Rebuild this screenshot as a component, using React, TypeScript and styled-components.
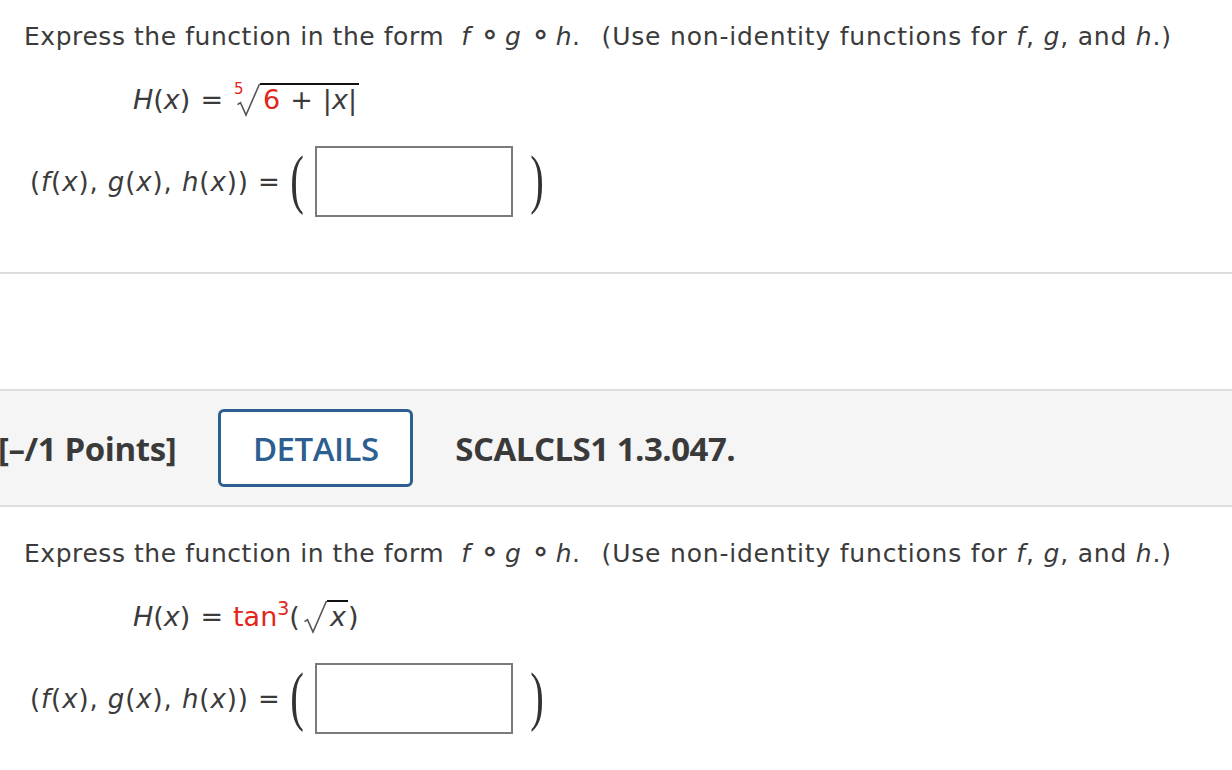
import * as React from "react";
import styled, { createGlobalStyle } from "styled-components";

const GlobalStyle = createGlobalStyle`
  body {
    margin: 0;
    background: #ffffff;
    font-family: "DejaVu Sans", Verdana, sans-serif;
    color: #3b3b3b;
  }
`;

const Page = styled.div`
  width: 1232px;
  height: 770px;
  overflow: hidden;
  display: flex;
  flex-direction: column;
`;

const Question = styled.section<{ $top: number }>`
  padding: ${(p) => p.$top}px 0 0 24px;
  display: flex;
  flex-direction: column;
`;

const Prompt = styled.p`
  margin: 0;
  font-size: 25px;
  letter-spacing: 0.55px;
  line-height: 30px;
  white-space: nowrap;
`;

const Note = styled.span`
  margin-left: 21px;
  letter-spacing: 0.8px;
`;

const Var = styled.i`
  font-style: italic;
`;

const Ring = styled.span`
  display: inline-block;
  margin: 0 5px 0 10px;
  font-weight: bold;
  font-size: 30px;
  line-height: 0;
  vertical-align: 1px;
`;

const Formula = styled.div`
  margin-top: 31px;
  padding-left: 109px;
  font-size: 27px;
  line-height: 32px;
  white-space: nowrap;
`;

const Op = styled.span<{ $space: number }>`
  margin: 0 ${(p) => p.$space}px;
`;

const Red = styled.span`
  color: #e3261b;
`;

const RadicalWrap = styled.span<{ $glyph: number }>`
  position: relative;
  display: inline-block;
  padding-left: ${(p) => p.$glyph}px;
  margin-left: 3px;
`;

const RadicalGlyph = styled.svg`
  position: absolute;
  left: 0;
  top: 0;
  height: 100%;
  overflow: visible;
`;

const RootIndex = styled.span`
  position: absolute;
  left: -2px;
  top: -1px;
  color: #e3261b;
  font-size: 15px;
  line-height: 1;
`;

const Radicand = styled.span`
  display: inline-block;
  border-top: 2px solid #111;
  padding: 0 2px 0 3px;
  line-height: 30px;
`;

const Power = styled.sup`
  font-size: 19px;
  line-height: 0;
  vertical-align: 11px;
`;

const AnswerRow = styled.div<{ $gap: number }>`
  margin-top: ${(p) => p.$gap}px;
  padding-left: 6px;
  display: flex;
  align-items: center;
`;

const AnswerLabel = styled.span`
  font-size: 26px;
  letter-spacing: 0.9px;
  white-space: pre;
`;

const BigParen = styled.span<{ $side: "open" | "close" }>`
  font-family: "Liberation Serif", serif;
  font-size: 48px;
  color: #333;
  display: inline-block;
  transform: scale(0.85, 1.35) translateY(-2px);
  margin: ${(p) => (p.$side === "open" ? "0 10px 0 8px" : "0 0 0 16px")};
`;

const AnswerBox = styled.input`
  width: 198px;
  height: 71px;
  box-sizing: border-box;
  border: 2px solid #7b7b7b;
  border-radius: 0;
  margin: 0;
  background: #fff;
`;

const Divider = styled.hr<{ $top: number }>`
  margin: ${(p) => p.$top}px 0 0 0;
  border: none;
  border-top: 2px solid #dcdcdc;
`;

const Bar = styled.div`
  margin-top: 115px;
  height: 114px;
  background: #f5f5f5;
  border-top: 2px solid #dedede;
  border-bottom: 2px solid #dedede;
  display: flex;
  align-items: center;
  gap: 42px;
  font-family: "Open Sans", sans-serif;
  font-weight: 700;
  font-size: 33px;
  color: #3a3a3a;
`;

const Points = styled.span`
  margin-left: -2px;
  letter-spacing: -0.4px;
`;

const DetailsButton = styled.button`
  width: 195px;
  height: 78px;
  box-sizing: border-box;
  border: 3px solid #2c5e90;
  border-radius: 6px;
  background: #ffffff;
  color: #2c5e90;
  font-family: "Open Sans", sans-serif;
  font-weight: 600;
  font-size: 33px;
  letter-spacing: -0.5px;
`;

const Code = styled.span`
  letter-spacing: -0.5px;
`;

function Radical(props: { index?: string; children: React.ReactNode }) {
  return (
    <RadicalWrap $glyph={24}>
      <RadicalGlyph viewBox="0 0 24 32" preserveAspectRatio="none" width={24}>
        <path
          d="M1.5 21 L4.5 19 L10 31 L23.5 1"
          fill="none"
          stroke="#555"
          strokeWidth={1.6}
          vectorEffect="non-scaling-stroke"
        />
      </RadicalGlyph>
      {props.index && <RootIndex>{props.index}</RootIndex>}
      <Radicand>{props.children}</Radicand>
    </RadicalWrap>
  );
}

function PromptLine() {
  return (
    <Prompt>
      Express the function in the form&nbsp; <Var>f</Var>
      <Ring>∘</Ring>
      <Var>g</Var>
      <Ring>∘</Ring>
      <Var>h</Var>.
      <Note>
        (Use non-identity functions for <Var>f</Var>, <Var>g</Var>, and <Var>h</Var>.)
      </Note>
    </Prompt>
  );
}

function Answer(props: { gap: number }) {
  return (
    <AnswerRow $gap={props.gap}>
      <AnswerLabel>
        (<Var>f</Var>(<Var>x</Var>), <Var>g</Var>(<Var>x</Var>), <Var>h</Var>(<Var>x</Var>)) =
      </AnswerLabel>
      <BigParen $side="open">(</BigParen>
      <AnswerBox type="text" aria-label="answer" />
      <BigParen $side="close">)</BigParen>
    </AnswerRow>
  );
}

export default function App() {
  return (
    <Page>
      <GlobalStyle />
      <Question $top={22}>
        <PromptLine />
        <Formula>
          <Var>H</Var>(<Var>x</Var>)<Op $space={10}>=</Op>
          <Radical index="5">
            <Red>6</Red>
            <Op $space={10}>+</Op>|<Var>x</Var>|
          </Radical>
        </Formula>
        <Answer gap={30} />
      </Question>
      <Divider $top={55} />
      <Bar>
        <Points>[–/1 Points]</Points>
        <DetailsButton>DETAILS</DetailsButton>
        <Code>SCALCLS1 1.3.047.</Code>
      </Bar>
      <Question $top={32}>
        <PromptLine />
        <Formula>
          <Var>H</Var>(<Var>x</Var>)<Op $space={10}>=</Op>
          <Red>tan</Red>
          <Power>
            <Red>3</Red>
          </Power>
          (
          <Radical>
            <Var>x</Var>
          </Radical>
          )
        </Formula>
        <Answer gap={30} />
      </Question>
    </Page>
  );
}
